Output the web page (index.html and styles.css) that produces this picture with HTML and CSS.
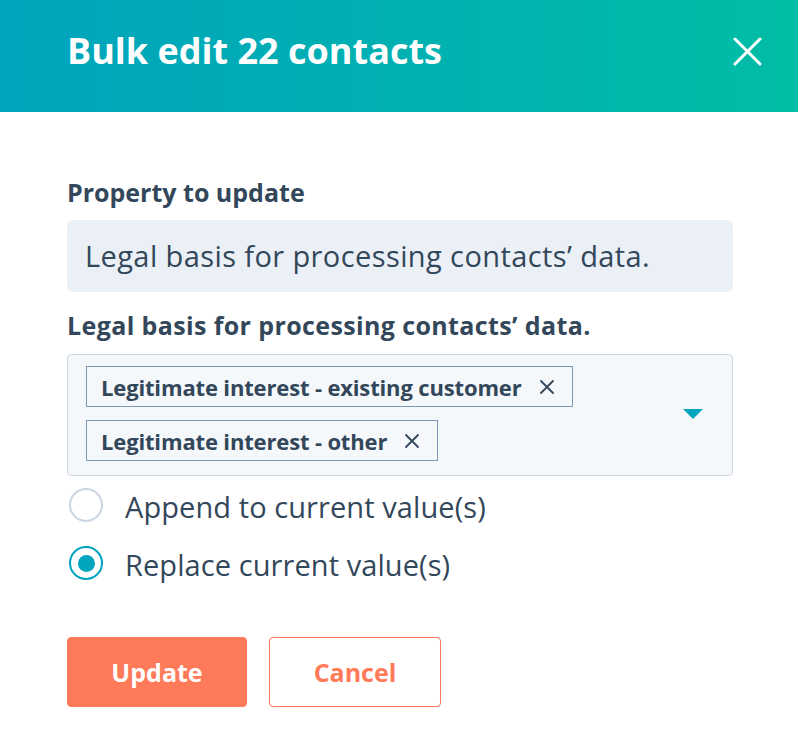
FILE: index.html
```html
<!DOCTYPE html>
<html lang="en">
<head>
<meta charset="utf-8">
<title>Bulk edit 22 contacts</title>
<link rel="stylesheet" href="styles.css">
</head>
<body>
<div class="modal">
  <header class="modal-header">
    <h1 class="modal-title">Bulk edit 22 contacts</h1>
    <button class="close-btn" aria-label="Close">
      <svg width="29" height="29" viewBox="0 0 29 29"><path d="M2 2 L27 27 M27 2 L2 27" stroke="#ffffff" stroke-width="3" stroke-linecap="round" fill="none"/></svg>
    </button>
  </header>
  <div class="modal-body">
    <div class="field-label label-property">Property to update</div>
    <div class="property-input">Legal basis for processing contacts’ data.</div>
    <div class="field-label label-values">Legal basis for processing contacts’ data.</div>
    <div class="multi-select">
      <div class="tags">
        <span class="tag"><span class="tag-text">Legitimate interest - existing customer</span><svg class="tag-x" width="14" height="14" viewBox="0 0 14 14"><path d="M1 1 L13 13 M13 1 L1 13" stroke="#33475b" stroke-width="1.8" stroke-linecap="round" fill="none"/></svg></span>
        <span class="tag"><span class="tag-text">Legitimate interest - other</span><svg class="tag-x" width="14" height="14" viewBox="0 0 14 14"><path d="M1 1 L13 13 M13 1 L1 13" stroke="#33475b" stroke-width="1.8" stroke-linecap="round" fill="none"/></svg></span>
      </div>
      <svg class="caret" width="20" height="10" viewBox="0 0 20 10"><polygon points="0,0 20,0 10,10" fill="#00a4bd"/></svg>
    </div>
    <div class="radio-group">
      <div class="radio-row"><span class="radio"></span><span class="radio-text">Append to current value(s)</span></div>
      <div class="radio-row"><span class="radio radio-checked"></span><span class="radio-text">Replace current value(s)</span></div>
    </div>
    <div class="actions">
      <button class="btn btn-primary">Update</button>
      <button class="btn btn-secondary">Cancel</button>
    </div>
  </div>
</div>
</body>
</html>
```
FILE: styles.css
```css
* { box-sizing: border-box; }
html, body { margin: 0; padding: 0; background: #ffffff; }
body {
  font-family: "Open Sans", "Liberation Sans", sans-serif;
  color: #33475b;
}
.modal { width: 798px; }
.modal-header {
  height: 112px;
  display: flex;
  align-items: center;
  justify-content: space-between;
  padding: 0 36px 0 67px;
  background: linear-gradient(to right, #00a4bd, #00bda5);
}
.modal-title {
  margin: 0 0 10px 0;
  font-size: 36px;
  line-height: 40px;
  font-weight: 700;
  color: #ffffff;
}
.close-btn {
  border: 0;
  background: none;
  padding: 0;
  margin: 0 0 10px 0;
  width: 29px;
  height: 29px;
  display: block;
}
.close-btn svg { display: block; }
.modal-body { padding: 65px 65px 0 67px; }
.field-label {
  font-size: 25px;
  line-height: 30px;
  font-weight: 700;
}
.property-input {
  margin-top: 13px;
  height: 72px;
  border-radius: 6px;
  background: #eaf0f6;
  display: flex;
  align-items: center;
  padding-left: 18px;
  font-size: 29px;
  line-height: 36px;
  letter-spacing: 0.4px;
}
.label-values {
  margin-top: 18px;
  letter-spacing: 0.38px;
}
.multi-select {
  margin-top: 14px;
  background: #f5f8fa;
  border: 1px solid #cbd6e2;
  border-radius: 4px;
  padding: 11px 29px 14px 18px;
  display: flex;
  align-items: center;
}
.tags {
  flex: 1;
  display: flex;
  flex-direction: column;
  align-items: flex-start;
  gap: 13px;
}
.tag {
  height: 41px;
  display: inline-flex;
  align-items: center;
  border: 1px solid #7c98b6;
  padding: 0 18px 0 14px;
  font-size: 22px;
  font-weight: 700;
  letter-spacing: -0.15px;
}
.tag-x { margin-left: 18px; display: block; }
.caret { display: block; }
.radio-group {
  margin-top: 4px;
  display: flex;
  flex-direction: column;
  gap: 8px;
}
.radio-row {
  height: 50px;
  display: flex;
  align-items: center;
  padding-left: 2px;
}
.radio {
  width: 34px;
  height: 34px;
  border-radius: 50%;
  border: 2px solid #cbd6e2;
  background: #ffffff;
  display: flex;
  align-items: center;
  justify-content: center;
}
.radio-checked { border-color: #00a4bd; }
.radio-checked::after {
  content: "";
  width: 17px;
  height: 17px;
  border-radius: 50%;
  background: #00a4bd;
}
.radio-text {
  margin-left: 22px;
  padding-top: 3px;
  font-size: 29px;
  line-height: 36px;
  letter-spacing: 0.08px;
}
.actions {
  margin-top: 49px;
  display: flex;
  gap: 22px;
}
.btn {
  height: 70px;
  border-radius: 4px;
  font-family: "Open Sans", "Liberation Sans", sans-serif;
  font-size: 25px;
  font-weight: 700;
  cursor: pointer;
}
.btn-primary {
  width: 180px;
  background: #ff7a59;
  border: 1px solid #ff7a59;
  color: #ffffff;
}
.btn-secondary {
  width: 172px;
  background: #ffffff;
  border: 1px solid #ff7a59;
  color: #ff7a59;
}
```
